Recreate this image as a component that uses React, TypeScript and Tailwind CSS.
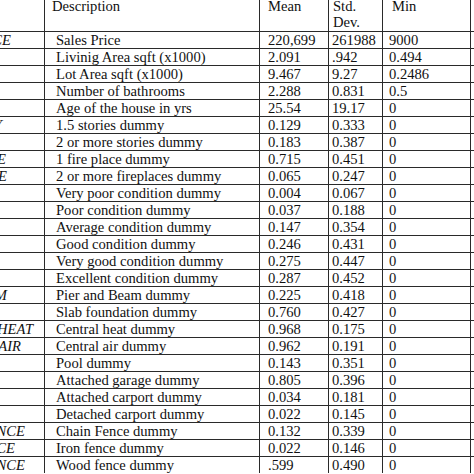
const rows: { v: string; pr: string; d: string; mean: string; sd: string; min: string }[] = [
  { v: 'SALEPRICE', pr: 'pr-[33px]', d: 'Sales Price', mean: '220,699', sd: '261988', min: '9000' },
  { v: '', pr: 'pr-0', d: 'Livinig Area sqft (x1000)', mean: '2.091', sd: '.942', min: '0.494' },
  { v: '', pr: 'pr-0', d: 'Lot Area sqft (x1000)', mean: '9.467', sd: '9.27', min: '0.2486' },
  { v: '', pr: 'pr-0', d: 'Number of bathrooms', mean: '2.288', sd: '0.831', min: '0.5' },
  { v: '', pr: 'pr-0', d: 'Age of the house in yrs', mean: '25.54', sd: '19.17', min: '0' },
  { v: 'HALFSTORY', pr: 'pr-[42px]', d: '1.5 stories dummy', mean: '0.129', sd: '0.333', min: '0' },
  { v: '', pr: 'pr-0', d: '2 or more stories dummy', mean: '0.183', sd: '0.387', min: '0' },
  { v: 'FIREPLACE', pr: 'pr-[38px]', d: '1 fire place dummy', mean: '0.715', sd: '0.451', min: '0' },
  { v: 'FIREPLACE', pr: 'pr-[37px]', d: '2 or more fireplaces dummy', mean: '0.065', sd: '0.247', min: '0' },
  { v: '', pr: 'pr-0', d: 'Very poor condition dummy', mean: '0.004', sd: '0.067', min: '0' },
  { v: '', pr: 'pr-0', d: 'Poor condition dummy', mean: '0.037', sd: '0.188', min: '0' },
  { v: '', pr: 'pr-0', d: 'Average condition dummy', mean: '0.147', sd: '0.354', min: '0' },
  { v: '', pr: 'pr-0', d: 'Good condition dummy', mean: '0.246', sd: '0.431', min: '0' },
  { v: '', pr: 'pr-0', d: 'Very good condition dummy', mean: '0.275', sd: '0.447', min: '0' },
  { v: '', pr: 'pr-0', d: 'Excellent condition dummy', mean: '0.287', sd: '0.452', min: '0' },
  { v: 'PIERBEAM', pr: 'pr-[37px]', d: 'Pier and Beam dummy', mean: '0.225', sd: '0.418', min: '0' },
  { v: '', pr: 'pr-0', d: 'Slab foundation dummy', mean: '0.760', sd: '0.427', min: '0' },
  { v: 'CENTRALHEAT', pr: 'pr-[11px]', d: 'Central heat dummy', mean: '0.968', sd: '0.175', min: '0' },
  { v: 'CENTRALAIR', pr: 'pr-[23px]', d: 'Central air dummy', mean: '0.962', sd: '0.191', min: '0' },
  { v: '', pr: 'pr-0', d: 'Pool dummy', mean: '0.143', sd: '0.351', min: '0' },
  { v: '', pr: 'pr-0', d: 'Attached garage dummy', mean: '0.805', sd: '0.396', min: '0' },
  { v: '', pr: 'pr-0', d: 'Attached carport dummy', mean: '0.034', sd: '0.181', min: '0' },
  { v: '', pr: 'pr-0', d: 'Detached carport dummy', mean: '0.022', sd: '0.145', min: '0' },
  { v: 'CHAINFENCE', pr: 'pr-[19px]', d: 'Chain Fence dummy', mean: '0.132', sd: '0.339', min: '0' },
  { v: 'IRONFENCE', pr: 'pr-[29px]', d: 'Iron fence dummy', mean: '0.022', sd: '0.146', min: '0' },
  { v: 'WOODFENCE', pr: 'pr-[19px]', d: 'Wood fence dummy', mean: '.599', sd: '0.490', min: '0' },
];

const grid = 'grid grid-cols-[45px_215px_69px_54px_88px]';

export default function App() {
  return (
    <div className="w-[474px] h-[474px] overflow-hidden bg-white text-[#111] font-['Liberation_Serif',serif] text-[14.6px]">
      {/* header, top is cut off in the shot */}
      <div className={`${grid} h-[31px] leading-[16px]`}>
        <div className="border-r border-[#2a2a2a]" />
        <div className="border-r border-[#2a2a2a] pl-[7px]">
          <div className="-mt-[2px]">Description</div>
        </div>
        <div className="border-r border-[#2a2a2a] pl-[8px]">
          <div className="-mt-[2px]">Mean</div>
        </div>
        <div className="border-r border-[#2a2a2a] pl-[4px]">
          <div className="-mt-[2px]">
            Std.
            <br />
            Dev.
          </div>
        </div>
        <div className="border-r border-[#2a2a2a] pl-[9px]">
          <div className="-mt-[2px]">Min</div>
        </div>
      </div>

      {rows.map((r, i) => (
        <div key={i} className={`${grid} h-[17px] border-t border-[#2a2a2a] leading-[16px]`}>
          <div className={`border-r border-[#2a2a2a] overflow-hidden flex justify-end whitespace-nowrap italic ${r.pr}`}>
            {r.v}
          </div>
          <div className="border-r border-[#2a2a2a] pl-[11px] whitespace-nowrap">{r.d}</div>
          <div className="border-r border-[#2a2a2a] pl-[8px]">{r.mean}</div>
          <div className="border-r border-[#2a2a2a] pl-[3px]">{r.sd}</div>
          <div className="border-r border-[#2a2a2a] pl-[6px]">{r.min}</div>
        </div>
      ))}
    </div>
  );
}
